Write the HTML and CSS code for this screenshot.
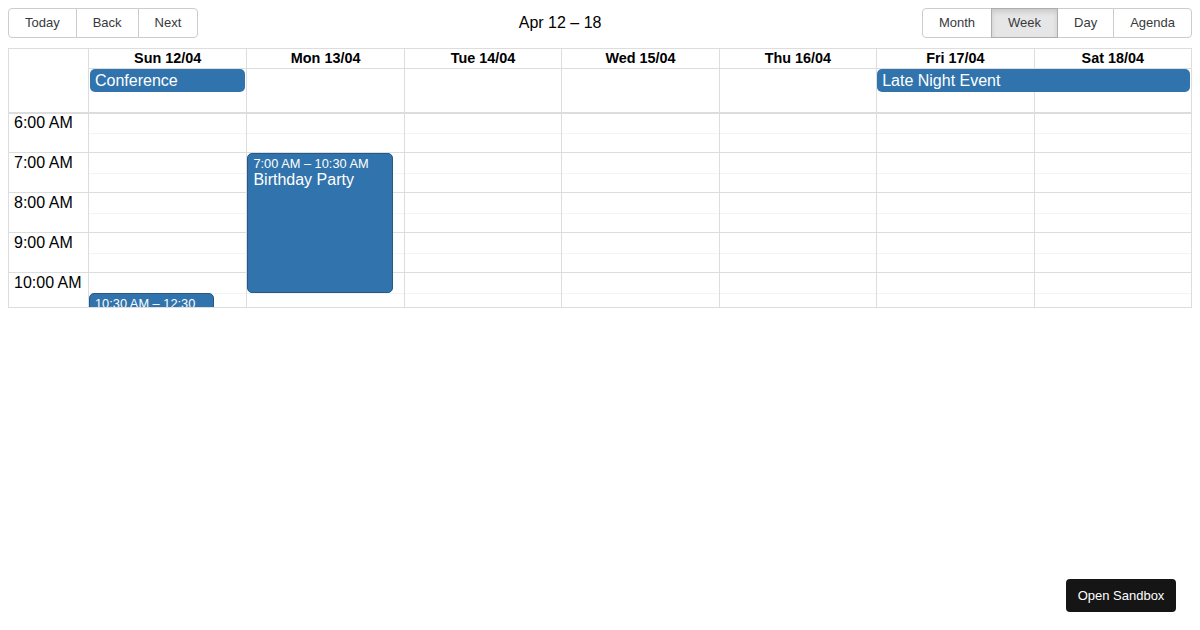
FILE: index.html
```html
<!DOCTYPE html>
<html lang="en">
<head>
<meta charset="utf-8">
<title>Calendar</title>
<link rel="stylesheet" href="styles.css">
</head>
<body>
<div class="toolbar">
  <div class="btn-group">
    <button class="btn">Today</button><button class="btn">Back</button><button class="btn">Next</button>
  </div>
  <span class="toolbar-label">Apr 12 – 18</span>
  <div class="btn-group">
    <button class="btn">Month</button><button class="btn active">Week</button><button class="btn">Day</button><button class="btn">Agenda</button>
  </div>
</div>

<div class="cal">
  <div class="head">
    <div class="head-gutter"></div>
    <div class="head-main">
      <div class="names">
        <div class="name">Sun 12/04</div>
        <div class="name">Mon 13/04</div>
        <div class="name">Tue 14/04</div>
        <div class="name">Wed 15/04</div>
        <div class="name">Thu 16/04</div>
        <div class="name">Fri 17/04</div>
        <div class="name">Sat 18/04</div>
      </div>
      <div class="allday">
        <div class="bg c1"></div><div class="bg c2"></div><div class="bg c3"></div><div class="bg c4"></div><div class="bg c5"></div><div class="bg c6"></div><div class="bg c7"></div>
        <div class="aevent" style="grid-column: 1 / 2;">Conference</div>
        <div class="aevent" style="grid-column: 6 / 8;">Late Night Event</div>
      </div>
    </div>
  </div>

  <div class="body">
    <div class="gutter">
      <div class="group first"><div class="glabel">6:00 AM</div></div>
      <div class="group"><div class="glabel">7:00 AM</div></div>
      <div class="group"><div class="glabel">8:00 AM</div></div>
      <div class="group"><div class="glabel">9:00 AM</div></div>
      <div class="group"><div class="glabel">10:00 AM</div></div>
    </div>

    <div class="col">
      <div class="group first"><div class="slot"></div><div class="slot"></div></div>
      <div class="group"><div class="slot"></div><div class="slot"></div></div>
      <div class="group"><div class="slot"></div><div class="slot"></div></div>
      <div class="group"><div class="slot"></div><div class="slot"></div></div>
      <div class="group"><div class="slot"></div><div class="slot"></div></div>
      <div class="tevent" style="top:179px; height:80px; width:125px;">
        <div class="lbl">10:30 AM – 12:30 PM</div>
        <div class="ttl">Meeting</div>
      </div>
    </div>

    <div class="col">
      <div class="group first"><div class="slot"></div><div class="slot"></div></div>
      <div class="group"><div class="slot"></div><div class="slot"></div></div>
      <div class="group"><div class="slot"></div><div class="slot"></div></div>
      <div class="group"><div class="slot"></div><div class="slot"></div></div>
      <div class="group"><div class="slot"></div><div class="slot"></div></div>
      <div class="tevent" style="top:39px; height:140px; width:146px;">
        <div class="lbl">7:00 AM – 10:30 AM</div>
        <div class="ttl">Birthday Party</div>
      </div>
    </div>

    <div class="col">
      <div class="group first"><div class="slot"></div><div class="slot"></div></div>
      <div class="group"><div class="slot"></div><div class="slot"></div></div>
      <div class="group"><div class="slot"></div><div class="slot"></div></div>
      <div class="group"><div class="slot"></div><div class="slot"></div></div>
      <div class="group"><div class="slot"></div><div class="slot"></div></div>
    </div>

    <div class="col">
      <div class="group first"><div class="slot"></div><div class="slot"></div></div>
      <div class="group"><div class="slot"></div><div class="slot"></div></div>
      <div class="group"><div class="slot"></div><div class="slot"></div></div>
      <div class="group"><div class="slot"></div><div class="slot"></div></div>
      <div class="group"><div class="slot"></div><div class="slot"></div></div>
    </div>

    <div class="col">
      <div class="group first"><div class="slot"></div><div class="slot"></div></div>
      <div class="group"><div class="slot"></div><div class="slot"></div></div>
      <div class="group"><div class="slot"></div><div class="slot"></div></div>
      <div class="group"><div class="slot"></div><div class="slot"></div></div>
      <div class="group"><div class="slot"></div><div class="slot"></div></div>
    </div>

    <div class="col">
      <div class="group first"><div class="slot"></div><div class="slot"></div></div>
      <div class="group"><div class="slot"></div><div class="slot"></div></div>
      <div class="group"><div class="slot"></div><div class="slot"></div></div>
      <div class="group"><div class="slot"></div><div class="slot"></div></div>
      <div class="group"><div class="slot"></div><div class="slot"></div></div>
    </div>

    <div class="col">
      <div class="group first"><div class="slot"></div><div class="slot"></div></div>
      <div class="group"><div class="slot"></div><div class="slot"></div></div>
      <div class="group"><div class="slot"></div><div class="slot"></div></div>
      <div class="group"><div class="slot"></div><div class="slot"></div></div>
      <div class="group"><div class="slot"></div><div class="slot"></div></div>
    </div>
  </div>
</div>

<button class="sandbox">Open Sandbox</button>
</body>
</html>
```

FILE: styles.css
```css
* {
  box-sizing: border-box;
}

body {
  margin: 8px;
  font-family: "Liberation Sans", Arial, sans-serif;
  font-size: 16px;
  color: #000;
  background: #fff;
}

/* Toolbar */
.toolbar {
  display: flex;
  align-items: center;
  height: 30px;
  margin-bottom: 10px;
}

.btn-group {
  display: flex;
}

.btn {
  font-family: inherit;
  font-size: 13px;
  line-height: 16px;
  color: #373a3c;
  background: #fff;
  border: 1px solid #ccc;
  padding: 6px 16px;
  margin: 0;
  border-radius: 0;
  cursor: pointer;
}

.btn + .btn {
  margin-left: -1px;
}

.btn:first-child {
  border-radius: 4px 0 0 4px;
}

.btn:last-child {
  border-radius: 0 4px 4px 0;
}

.btn.active {
  background: #e6e6e6;
  border-color: #adadad;
  box-shadow: inset 0 3px 5px rgba(0, 0, 0, 0.125);
  position: relative;
  z-index: 1;
}

.toolbar-label {
  flex: 1;
  text-align: center;
  padding: 0 10px;
  font-size: 16px;
}

/* Calendar */
.cal {
  border: 1px solid #ddd;
  height: 260px;
  display: flex;
  flex-direction: column;
  overflow: hidden;
}

.head {
  flex: none;
  display: grid;
  grid-template-columns: 80px 1fr;
  border-bottom: 2px solid #ddd;
}

.head-gutter {
  border-right: 1px solid #ddd;
}

.head-main {
  min-width: 0;
}

.names {
  display: grid;
  grid-template-columns: repeat(7, minmax(0, 1fr));
  border-bottom: 1px solid #ddd;
}

.name {
  height: 19px;
  line-height: 19px;
  text-align: center;
  font-weight: bold;
  font-size: 14.4px;
  padding: 0 3px;
  white-space: nowrap;
  overflow: hidden;
}

.name + .name {
  border-left: 1px solid #ddd;
}

.allday {
  display: grid;
  grid-template-columns: repeat(7, minmax(0, 1fr));
  grid-template-rows: 24px 1fr;
  height: 43px;
}

.bg {
  grid-row: 1 / 3;
  border-left: 1px solid #ddd;
}

.bg.c1 { grid-column: 1; border-left: none; }
.bg.c2 { grid-column: 2; }
.bg.c3 { grid-column: 3; }
.bg.c4 { grid-column: 4; }
.bg.c5 { grid-column: 5; }
.bg.c6 { grid-column: 6; }
.bg.c7 { grid-column: 7; }

.aevent {
  grid-row: 1;
  margin: 0 1px 1px 1px;
  height: 23px;
  padding: 2px 5px;
  line-height: 19px;
  font-size: 16px;
  color: #fff;
  background: #3174ad;
  border-radius: 5px;
  white-space: nowrap;
  overflow: hidden;
  z-index: 1;
}

.body {
  flex: 1;
  min-height: 0;
  display: grid;
  grid-template-columns: 80px repeat(7, minmax(0, 1fr));
  overflow: hidden;
}

.gutter {
  border-right: 1px solid #ddd;
}

.col {
  position: relative;
}

.col + .col {
  border-left: 1px solid #ddd;
}

.group {
  height: 40px;
  border-bottom: 1px solid #ddd;
  display: flex;
  flex-direction: column;
}

.group.first {
  height: 39px;
}

.slot {
  height: 20px;
  flex: none;
}

.group.first .slot:first-child {
  height: 19px;
}

.slot + .slot {
  flex: 1;
  height: auto;
  border-top: 1px solid #f4f4f4;
}

.glabel {
  padding: 1px 5px 0;
  font-size: 16px;
  white-space: nowrap;
}

.group.first .glabel {
  padding-top: 0;
}

.tevent {
  position: absolute;
  left: 0;
  background: #3174ad;
  border: 1px solid #265985;
  border-radius: 5px;
  color: #fff;
  padding: 2px 5px;
  overflow: hidden;
  z-index: 2;
}

.lbl {
  font-size: 12.8px;
  padding-right: 5px;
}

.ttl {
  font-size: 16px;
}

/* Sandbox button */
.sandbox {
  position: fixed;
  right: 24px;
  bottom: 18px;
  width: 110px;
  height: 33px;
  border: none;
  border-radius: 4px;
  background: #151515;
  color: #fff;
  font-family: "Liberation Sans", Arial, sans-serif;
  font-size: 13px;
  padding: 0;
  cursor: pointer;
}
```
